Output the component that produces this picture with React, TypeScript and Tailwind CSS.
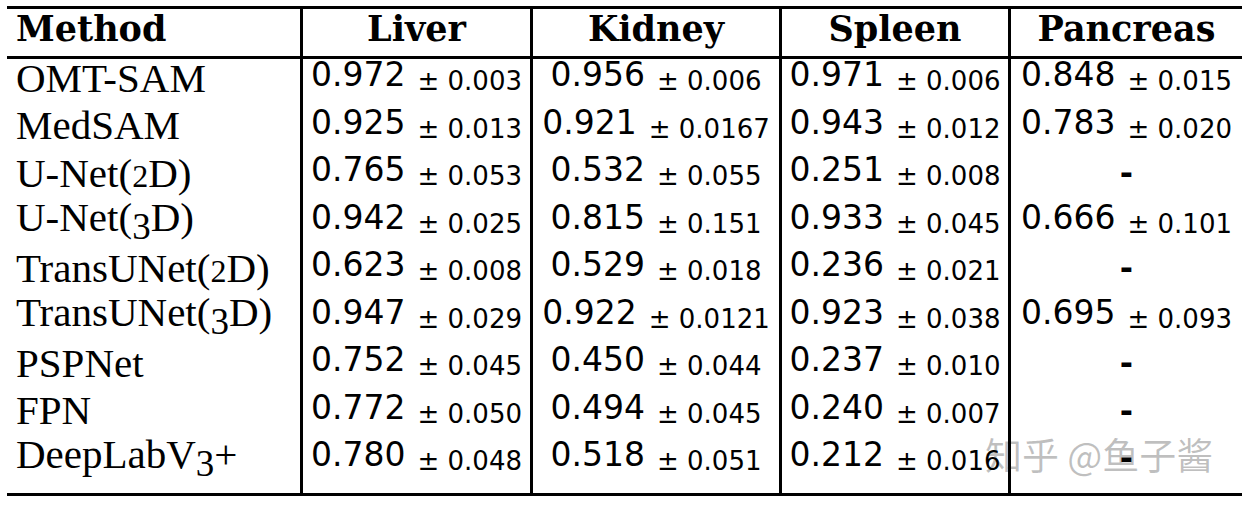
import React from 'react';

type Cell = [string, string] | null;

interface Row {
  name: string;
  cells: Cell[];
}

const ROWS: Row[] = [
  { name: 'OMT-SAM', cells: [['0.972', '0.003'], ['0.956', '0.006'], ['0.971', '0.006'], ['0.848', '0.015']] },
  { name: 'MedSAM', cells: [['0.925', '0.013'], ['0.921', '0.0167'], ['0.943', '0.012'], ['0.783', '0.020']] },
  { name: 'U-Net(2D)', cells: [['0.765', '0.053'], ['0.532', '0.055'], ['0.251', '0.008'], null] },
  { name: 'U-Net(3D)', cells: [['0.942', '0.025'], ['0.815', '0.151'], ['0.933', '0.045'], ['0.666', '0.101']] },
  { name: 'TransUNet(2D)', cells: [['0.623', '0.008'], ['0.529', '0.018'], ['0.236', '0.021'], null] },
  { name: 'TransUNet(3D)', cells: [['0.947', '0.029'], ['0.922', '0.0121'], ['0.923', '0.038'], ['0.695', '0.093']] },
  { name: 'PSPNet', cells: [['0.752', '0.045'], ['0.450', '0.044'], ['0.237', '0.010'], null] },
  { name: 'FPN', cells: [['0.772', '0.050'], ['0.494', '0.045'], ['0.240', '0.007'], null] },
  { name: 'DeepLabV3+', cells: [['0.780', '0.048'], ['0.518', '0.051'], ['0.212', '0.016'], null] },
];

const HEADERS = ['Liver', 'Kidney', 'Spleen', 'Pancreas'];

const serif = "font-['Liberation_Serif','Times_New_Roman',serif]";
const serifBold = "font-['DejaVu_Serif','Liberation_Serif',serif] font-bold";
const sans = "font-['DejaVu_Sans','Verdana',sans-serif]";

// old-style figures: 2 sits on x-height, 3 drops below the baseline
function MethodName({ name }: { name: string }) {
  const parts = name.split(/([23])/);
  return (
    <span>
      {parts.map((p, i) => {
        if (p === '2') {
          return (
            <span key={i} className="text-[32px]">
              2
            </span>
          );
        }
        if (p === '3') {
          return (
            <span key={i} className="align-[-8px] text-[37px]">
              3
            </span>
          );
        }
        return <span key={i}>{p}</span>;
      })}
    </span>
  );
}

function Value({ cell }: { cell: Cell }) {
  if (!cell) {
    return (
      <span className={`${sans} text-[32px] font-bold`}>
        <span className="align-[-4px]">-</span>
      </span>
    );
  }
  return (
    <span className={`${sans} whitespace-nowrap text-[33px]`}>
      {cell[0]}
      <span className="ml-[12px] align-[-4px] text-[26px]">± {cell[1]}</span>
    </span>
  );
}

const colClass = [
  'pl-[9px] justify-start',
  'border-l-[3px] border-black justify-center',
  'border-l-[3px] border-black justify-center',
  'border-l-[3px] border-black justify-center',
  'border-l-[3px] border-black justify-center',
];

export default function App() {
  return (
    <div className="h-[505px] w-[1254px] bg-white pl-[7px] pt-[6px] text-black">
      <div className="relative w-[1235px] border-y-[3px] border-black">
        <div className="grid h-[50px] grid-cols-[293px_230px_249px_229px_234px] border-b-[3px] border-black">
          <div className={`flex h-[47px] items-center pb-[9px] leading-none ${colClass[0]} ${serifBold} text-[35px]`}>
            Method
          </div>
          {HEADERS.map((h, i) => (
            <div
              key={h}
              className={`flex h-[47px] items-center pb-[9px] leading-none ${colClass[i + 1]} ${serifBold} text-[35px]`}
            >
              {h}
            </div>
          ))}
        </div>
        <div className="grid grid-cols-[293px_230px_249px_229px_234px]">
          {ROWS.map((row, ri) => (
            <React.Fragment key={row.name}>
              <div
                className={`flex h-[47.5px] items-center pb-[9px] ${colClass[0]} ${serif} text-[41px] leading-none whitespace-nowrap ${
                  ri === ROWS.length - 1 ? 'h-[53.5px] pb-[15px]' : ''
                }`}
              >
                <MethodName name={row.name} />
              </div>
              {row.cells.map((c, ci) => (
                <div
                  key={ci}
                  className={`flex h-[47.5px] items-center pb-[13px] leading-none ${colClass[ci + 1]} ${
                    ri === ROWS.length - 1 ? 'h-[53.5px] pb-[19px]' : ''
                  }`}
                >
                  <Value cell={c} />
                </div>
              ))}
            </React.Fragment>
          ))}
        </div>
        <div className="pointer-events-none absolute left-[978px] top-[427px] whitespace-nowrap font-['Noto_Sans_CJK_SC',sans-serif] text-[37px] leading-none text-black/25">
          知乎 @鱼子酱
        </div>
      </div>
    </div>
  );
}
